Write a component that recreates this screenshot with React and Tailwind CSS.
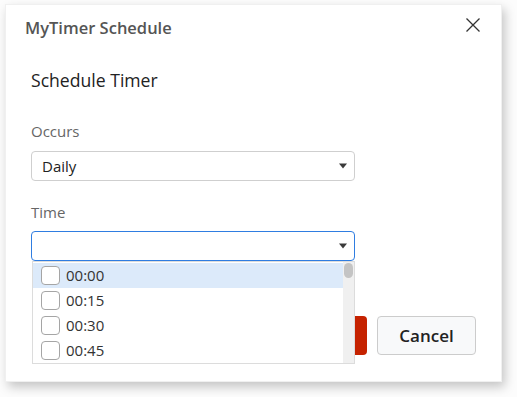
import React from 'react'

const times = ['00:00', '00:15', '00:30', '00:45']

const Caret = () => (
  <span className="absolute right-[7px] top-1/2 -translate-y-1/2 w-0 h-0 border-l-[4px] border-r-[4px] border-t-[5px] border-l-transparent border-r-transparent border-t-[#3a3a3a]" />
)

const App = () => {
  return (
    <div className="w-[517px] h-[397px] bg-[#fcfcfc] pt-[4px] pl-[5px] font-['Open_Sans',sans-serif]">
      <div className="relative w-[497px] h-[378px] bg-white border border-[#f0f0f0] shadow-[3px_5px_10px_rgba(0,0,0,0.22)]">
        {/* Header */}
        <div className="flex justify-between h-[46px] pl-[19px] pr-[20px]">
          <h1 className="self-center text-[16.5px] leading-[24px] font-semibold text-[#555]">MyTimer Schedule</h1>
          <button className="mt-[12px] self-start text-[#333]">
            <svg width="16" height="16" viewBox="0 0 16 16">
              <path d="M1.5 1.5 L14.5 14.5 M14.5 1.5 L1.5 14.5" stroke="#333" strokeWidth="1.3" fill="none" />
            </svg>
          </button>
        </div>

        {/* Body */}
        <div className="px-[25px]">
          <h2 className="mt-[16px] text-[17.6px] leading-[26px] text-[#222]">Schedule Timer</h2>

          <div className="mt-[27px] text-[15px] leading-[22px] text-[#666]">Occurs</div>
          <div className="relative mt-[9px] w-[324px] h-[30px] border border-[#cfcfcf] rounded-[4px] flex items-center pl-[10px] text-[15px] text-[#222]">
            Daily
            <Caret />
          </div>

          <div className="mt-[20px] text-[15px] leading-[22px] text-[#666]">Time</div>
          <div className="relative mt-[8px] w-[324px]">
            <div className="relative h-[30px] border border-[#2f7de1] rounded-[4px]">
              <Caret />
            </div>
            {/* Open dropdown */}
            <div className="absolute z-10 top-[30px] left-[1px] w-[323px] h-[103px] bg-white border border-[#dcdcdc] flex">
              <div className="flex-1 pt-[1px]">
                {times.map((t, i) => (
                  <div
                    key={t}
                    className={`h-[25px] flex items-center pl-[8px] ${i === 0 ? 'bg-[#dceafa]' : ''}`}
                  >
                    <span className="w-[19px] h-[19px] rounded-[4px] border border-[#a5a5a5] bg-white" />
                    <span className="ml-[6px] text-[15px] text-[#333]">{t}</span>
                  </div>
                ))}
              </div>
              <div className="w-[11px] bg-[#f0f0f0] pt-[1px]">
                <div className="h-[15px] mx-[1px] rounded-full bg-[#c4c4c4]" />
              </div>
            </div>
          </div>
        </div>

        {/* Footer buttons */}
        <div className="flex justify-end gap-[10px] pr-[25px] mt-[55px]">
          <button className="w-[100px] h-[39px] rounded-[4px] bg-[#c52200] text-white text-[17px] font-semibold">
            Save
          </button>
          <button className="w-[99px] h-[39px] rounded-[4px] bg-[#f8f9fa] border border-[#cccccc] text-[17px] font-semibold text-[#222]">
            Cancel
          </button>
        </div>
      </div>
    </div>
  )
}

export default App
